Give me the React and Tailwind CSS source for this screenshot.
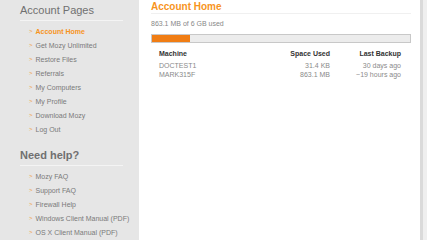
import React from "react";

const pages = [
  ["Account Home", true],
  ["Get Mozy Unlimited"],
  ["Restore Files"],
  ["Referrals"],
  ["My Computers"],
  ["My Profile"],
  ["Download Mozy"],
  ["Log Out"],
];
const help = [
  "Mozy FAQ",
  "Support FAQ",
  "Firewall Help",
  "Windows Client Manual (PDF)",
  "OS X Client Manual (PDF)",
];

function Item({ label, active }) {
  return (
    <li className="flex items-center h-[14px] pl-[9px] whitespace-nowrap">
      <span className="text-[#f0a040] text-[6px] mr-[3px] leading-none">&gt;</span>
      <span
        className={
          active
            ? "text-[7px] text-[#f7941d] font-bold leading-none"
            : "text-[7px] text-[#7a7a7a] leading-none"
        }
      >
        {label}
      </span>
    </li>
  );
}

export default function App() {
  return (
    <div
      className="flex w-[427px] h-[240px] overflow-hidden bg-white"
      style={{ fontFamily: '"Liberation Sans", Arial, sans-serif' }}
    >
      <aside className="w-[139px] shrink-0 bg-[#e6e6e6] pl-[20px] pr-[16px] pt-[3px]">
        <h2 className="text-[11px] text-[#707070] leading-[14px] h-[14px]">Account Pages</h2>
        <div className="h-px bg-[#f4f4f4] mt-[3px] mb-[3px]" />
        <ul>
          {pages.map(([l, a]) => (
            <Item key={l} label={l} active={a} />
          ))}
        </ul>
        <h2 className="text-[11px] text-[#707070] font-bold leading-[14px] mt-[12px]">Need help?</h2>
        <div className="h-px bg-[#f4f4f4] mt-[3px] mb-[3px]" />
        <ul>
          {help.map((l) => (
            <Item key={l} label={l} />
          ))}
        </ul>
      </aside>
      <main className="flex-1 pl-[12px] pr-[9px] pt-[1px]">
        <h1 className="text-[10px] font-bold text-[#f7941d] leading-[12px]">Account Home</h1>
        <div className="h-px bg-[#f0f0f0]" />
        <p className="text-[7px] text-[#888888] mt-[5px] leading-[9px]">863.1 MB of 6 GB used</p>
        <div className="mt-[6px] h-[9px] border border-[#c8c8c8] bg-[#ececec] flex">
          <div className="h-full bg-[#f07d14] w-[38px]" />
        </div>
        <div className="mt-[6px] pl-[8px] pr-[10px] text-[7px] leading-[9px]">
          <div className="flex font-bold text-[#333333]">
            <span className="flex-1">Machine</span>
            <span className="w-[60px] text-right">Space Used</span>
            <span className="w-[71px] text-right">Last Backup</span>
          </div>
          <div className="mt-[3px] text-[#8a8a8a]">
            <div className="flex">
              <span className="flex-1">DOCTEST1</span>
              <span className="w-[60px] text-right">31.4 KB</span>
              <span className="w-[71px] text-right">30 days ago</span>
            </div>
            <div className="flex">
              <span className="flex-1">MARK315F</span>
              <span className="w-[60px] text-right">863.1 MB</span>
              <span className="w-[71px] text-right">~19 hours ago</span>
            </div>
          </div>
        </div>
      </main>
      <div className="w-[7px] shrink-0 flex">
        <div className="w-[3px] bg-[#dadada]" />
        <div className="flex-1 bg-[#efefef]" />
      </div>
    </div>
  );
}
